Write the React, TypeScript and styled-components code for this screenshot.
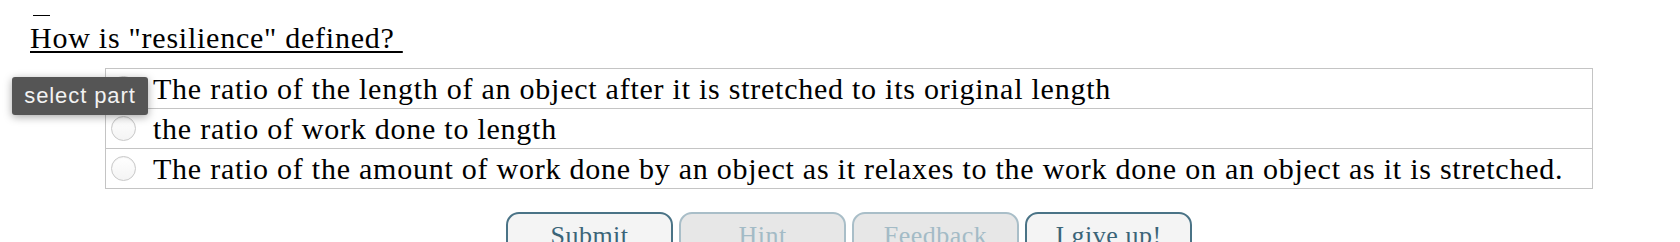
import styled, { createGlobalStyle } from "styled-components";

const GlobalStyle = createGlobalStyle`
  html, body {
    margin: 0;
    padding: 0;
    background: #ffffff;
    font-family: "Liberation Serif", "Times New Roman", serif;
    color: #000000;
  }
`;

const choices = [
  "The ratio of the length of an object after it is stretched to its original length",
  "the ratio of work done to length",
  "The ratio of the amount of work done by an object as it relaxes to the work done on an object as it is stretched.",
];

const buttons = [
  { label: "Submit", disabled: false },
  { label: "Hint", disabled: true },
  { label: "Feedback", disabled: true },
  { label: "I give up!", disabled: false },
];

const App = () => {
  return (
    <Page>
      <GlobalStyle />
      <Caret />
      <Question>How is "resilience" defined?&nbsp;</Question>
      <Part>
        <Tooltip>select part</Tooltip>
        <Choices>
          <tbody>
            {choices.map((text) => (
              <Choice key={text}>
                <ChoiceCell>
                  <Radio />
                  <ChoiceText>{text}</ChoiceText>
                </ChoiceCell>
              </Choice>
            ))}
          </tbody>
        </Choices>
        <ButtonRow>
          {buttons.map((b) => (
            <ActionButton key={b.label} $disabled={b.disabled}>
              {b.label}
            </ActionButton>
          ))}
        </ButtonRow>
      </Part>
    </Page>
  );
};

const Page = styled.div`
  position: relative;
  height: 242px;
  overflow: hidden;
  padding-top: 15px;
  box-sizing: border-box;
`;

const Caret = styled.div`
  width: 17px;
  height: 0;
  margin-left: 33px;
  border-top: 1.5px solid #000;
`;

const Question = styled.div`
  margin: 7px 0 0 30px;
  font-size: 30px;
  line-height: 30px;
  letter-spacing: 0.75px;
  text-decoration: underline;
  text-decoration-thickness: 2px;
  text-underline-offset: 3px;
`;

const Part = styled.div`
  margin: 15px 87px 0 105px;
`;

const Tooltip = styled.div`
  position: absolute;
  left: 12px;
  top: 77px;
  width: 136px;
  height: 38px;
  display: flex;
  align-items: center;
  justify-content: center;
  background: #555555;
  color: #f2f2f2;
  border-radius: 3px;
  font-family: "Liberation Sans", Arial, sans-serif;
  font-size: 22px;
  letter-spacing: 0.9px;
  box-shadow: 0 2px 8px rgba(0, 0, 0, 0.35);
  z-index: 2;
`;

const Choices = styled.table`
  width: 100%;
  border-collapse: collapse;
  border: 1.5px solid #c4c4c4;
`;

const Choice = styled.tr`
  border-bottom: 1.5px solid #c4c4c4;
`;

const ChoiceCell = styled.td`
  height: 39px;
  padding: 0 0 0 5px;
  display: flex;
  align-items: center;
`;

const Radio = styled.span`
  width: 23px;
  height: 23px;
  border-radius: 50%;
  border: 1px solid #c9c9c9;
  background: linear-gradient(#ffffff, #f4f4f4);
  box-shadow: inset 0 1px 1px rgba(0, 0, 0, 0.05);
  flex-shrink: 0;
`;

const ChoiceText = styled.span`
  margin-left: 17px;
  font-size: 30px;
  line-height: 32px;
  letter-spacing: 0.75px;
`;

const ButtonRow = styled.div`
  display: flex;
  justify-content: center;
  gap: 6px;
  margin-top: 23px;
`;

const ActionButton = styled.button<{ $disabled: boolean }>`
  width: 167px;
  height: 44px;
  padding: 4px 0 0;
  box-sizing: border-box;
  border: 2px solid ${(p) => (p.$disabled ? "#a9bec8" : "#4a7386")};
  border-radius: 13px;
  background: ${(p) => (p.$disabled ? "#e7e7e7" : "#f4f4f4")};
  color: ${(p) => (p.$disabled ? "#a3bbc6" : "#3b6478")};
  font-family: "Liberation Serif", Georgia, serif;
  font-size: 26px;
  letter-spacing: 0.5px;
  line-height: 30px;
  align-self: flex-start;
`;

export default App;
